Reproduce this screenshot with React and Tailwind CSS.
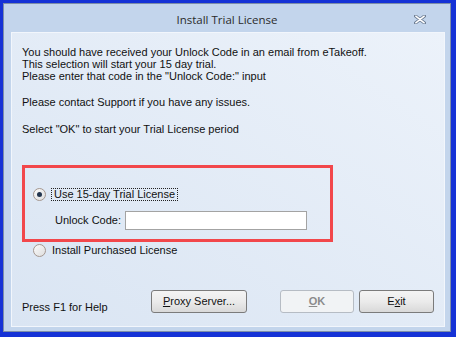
import React from "react";

function Radio({ checked }) {
  return (
    <span className="relative flex h-[13px] w-[13px] shrink-0 items-center justify-center rounded-full border border-[#a5978f] bg-linear-to-br from-[#fbfbfb] to-[#dedede]">
      {checked && <span className="h-[5px] w-[5px] rounded-full bg-[#23364f]" />}
    </span>
  );
}

function Button({ children, disabled, className }) {
  return (
    <div
      className={
        "flex h-[23px] items-center justify-center rounded-[3px] border " +
        (disabled
          ? "border-[#b6bcc4] bg-[#f1f3f5] text-[#8b8b8b] "
          : "border-[#7b7b7b] bg-linear-to-b from-[#f4f4f4] via-[#ebebeb] to-[#d9d9d9] text-[#111] ") +
        className
      }
    >
      {children}
    </div>
  );
}

export default function App() {
  return (
    <div
      className="h-[337px] w-[456px] bg-[#1532d6] pb-[5px] pl-[3px] pr-[5px] pt-[3px]"
      style={{ fontFamily: '"Liberation Sans", Arial, sans-serif' }}
    >
      <div className="flex h-full w-full flex-col border border-[#7d8ea8] bg-[#c3d5ec]">
        {/* title bar */}
        <div className="relative flex h-[28px] shrink-0 items-center justify-center">
          <span className="pt-[4px] text-[11.5px] text-[#2b2b2b]" style={{ fontFamily: '"Open Sans", "Noto Sans", sans-serif' }}>
            Install Trial License
          </span>
          <svg className="absolute right-[24px] top-[11px]" width="12" height="9" viewBox="0 0 12 9">
            <path d="M1.5 1 L10.5 8 M10.5 1 L1.5 8" stroke="#6c7c92" strokeWidth="3.2" strokeLinecap="round" />
            <path d="M1.8 1.2 L10.2 7.8 M10.2 1.2 L1.8 7.8" stroke="#ffffff" strokeWidth="1.5" strokeLinecap="round" />
          </svg>
        </div>

        {/* content */}
        <div className="relative mb-[4px] ml-[7px] mr-[5px] flex flex-1 flex-col border border-[#f2f6fc] bg-linear-to-bl from-[#ecf2fa] to-[#dae5f3] px-[10px] pt-[13px] text-[11px] text-[#111]">
          <div className="leading-[12px]">
            <div>You should have received your Unlock Code in an email from eTakeoff.</div>
            <div>This selection will start your 15 day trial.</div>
            <div>Please enter that code in the "Unlock Code:" input</div>
          </div>
          <div className="mt-[14px] leading-[12px]">Please contact Support if you have any issues.</div>
          <div className="mt-[15px] leading-[12px]">Select "OK" to start your Trial License period</div>

          <div className="mt-[53px] flex items-center pl-[11px]">
            <Radio checked />
            <span className="ml-[5px] border border-dotted border-[#222] px-[2px] leading-[11px]">Use 15-day Trial License</span>
          </div>

          <div className="mt-[10px] flex items-center pl-[33px]">
            <span className="w-[70px] leading-[13px]">Unlock Code:</span>
            <div className="h-[19px] w-[182px] border border-[#a3a3a3] bg-white" />
          </div>

          <div className="mt-[14px] flex items-center pl-[11px]">
            <Radio />
            <span className="ml-[6px] leading-[13px]">Install Purchased License</span>
          </div>

          <div className="mt-[33px] flex items-start">
            <span className="w-[129px] pt-[11px] leading-[13px]">Press F1 for Help</span>
            <Button className="w-[96px]">
              <span><span className="underline">P</span>roxy Server...</span>
            </Button>
            <Button disabled className="ml-[33px] w-[74px] font-bold">
              <span><span className="underline">O</span>K</span>
            </Button>
            <Button className="ml-[5px] w-[75px]">
              <span>E<span className="underline">x</span>it</span>
            </Button>
          </div>

          {/* annotation box */}
          <div className="pointer-events-none absolute left-[10px] top-[132px] h-[77px] w-[311px] border-[3px] border-[#f2474b]" />
        </div>
      </div>
    </div>
  );
}
